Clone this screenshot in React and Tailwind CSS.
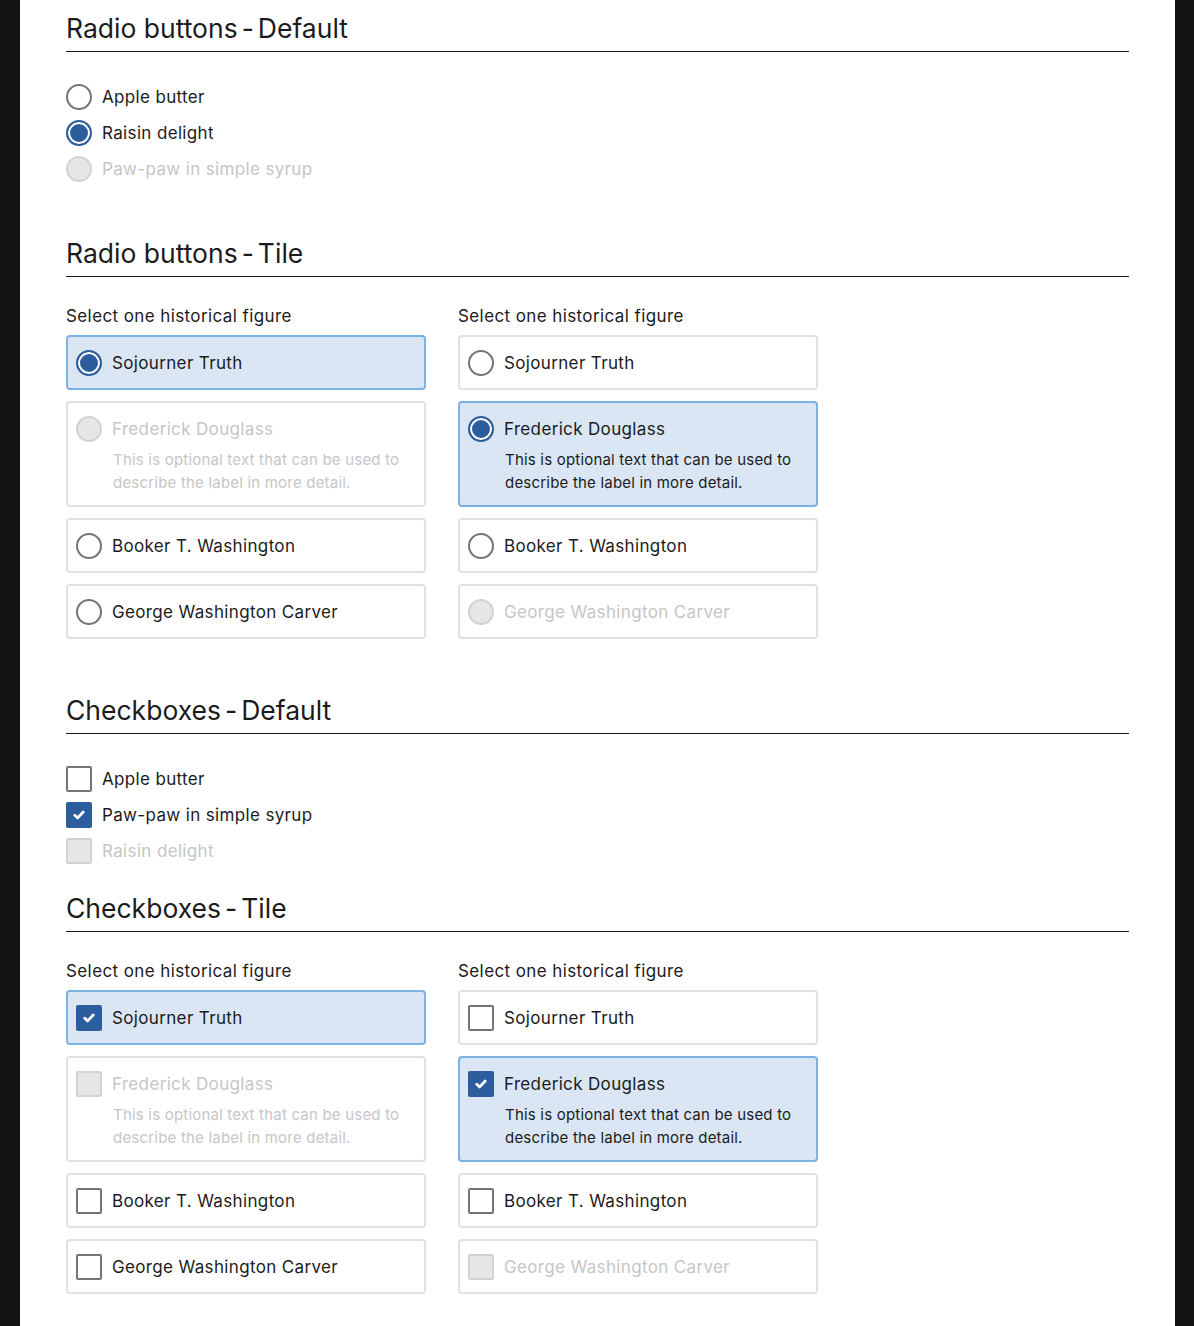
const FONT = { fontFamily: "Inter, 'Noto Sans', sans-serif" };

const Heading = ({ left, right, className = "" }) => (
    <h2 className={`text-[26.5px] leading-[34px] text-[#1b1b1b] pb-[6px] border-b border-[#1b1b1b] ${className}`}>
        {left}
        <span className="px-[4px]">-</span>
        {right}
    </h2>
);

const Radio = ({ checked, disabled }) => {
    if (disabled) {
        return <span className="shrink-0 w-[26px] h-[26px] rounded-full border-2 border-[#d2d2d2] bg-[#e6e6e6]"></span>;
    }
    if (checked) {
        return (
            <span className="shrink-0 w-[26px] h-[26px] rounded-full border-2 border-[#2c5e9e] bg-[#2c5e9e] shadow-[inset_0_0_0_2px_#fff]"></span>
        );
    }
    return <span className="shrink-0 w-[26px] h-[26px] rounded-full border-2 border-[#747474] bg-white"></span>;
};

const Checkbox = ({ checked, disabled }) => {
    if (disabled) {
        return <span className="shrink-0 w-[26px] h-[26px] rounded-[2px] border-2 border-[#d2d2d2] bg-[#e6e6e6]"></span>;
    }
    if (checked) {
        return (
            <span className="shrink-0 w-[26px] h-[26px] rounded-[2px] bg-[#2c5e9e] flex items-center justify-center">
                <svg width="12" height="10" viewBox="0 0 12 10" fill="none">
                    <path d="M1.8 5.3 L4.7 7.9 L10.2 2" stroke="#fff" strokeWidth="2.8" strokeLinecap="round" strokeLinejoin="round" />
                </svg>
            </span>
        );
    }
    return <span className="shrink-0 w-[26px] h-[26px] rounded-[2px] border-2 border-[#747474] bg-white"></span>;
};

const DefaultRow = ({ type, label, checked, disabled }) => (
    <div className="flex items-center gap-[10px] h-[36px]">
        {type === "radio" ? <Radio checked={checked} disabled={disabled} /> : <Checkbox checked={checked} disabled={disabled} />}
        <span className={`text-[17px] leading-[26px] tracking-[0.35px] ${disabled ? "text-[#c6c6c6]" : "text-[#1b1b1b]"}`}>{label}</span>
    </div>
);

const Tile = ({ type, label, desc, checked, disabled }) => {
    const box = checked
        ? "bg-[#dae6f4] border-[#7cb1e3]"
        : "bg-white border-[#e0e1e2]";
    const text = disabled ? "text-[#c6c6c6]" : "text-[#1b1b1b]";
    return (
        <div className={`flex items-start gap-[10px] border-2 rounded-[4px] pl-[8px] pr-[8px] pt-[12.5px] ${desc ? "pb-[11.5px]" : "pb-[12.5px]"} ${box}`}>
            {type === "radio" ? <Radio checked={checked} disabled={disabled} /> : <Checkbox checked={checked} disabled={disabled} />}
            <div>
                <div className={`text-[17px] leading-[26px] tracking-[0.35px] ${text}`}>{label}</div>
                {desc && (
                    <p className={`mt-[6px] text-[15px] leading-[23px] tracking-[0.2px] pl-[1px] ${text}`}>
                        This is optional text that can be used to
                        <br />
                        describe the label in more detail.
                    </p>
                )}
            </div>
        </div>
    );
};

const TileColumn = ({ type, items }) => (
    <div className="w-[360px]">
        <div className="text-[17px] leading-[24px] tracking-[0.4px] text-[#1b1b1b]">Select one historical figure</div>
        <div className="mt-[7px] flex flex-col gap-[11px]">
            {items.map((it) => (
                <Tile key={it.label} type={type} {...it} />
            ))}
        </div>
    </div>
);

const leftItems = [
    { label: "Sojourner Truth", checked: true },
    { label: "Frederick Douglass", desc: true, disabled: true },
    { label: "Booker T. Washington" },
    { label: "George Washington Carver" },
];

const rightItems = [
    { label: "Sojourner Truth" },
    { label: "Frederick Douglass", desc: true, checked: true },
    { label: "Booker T. Washington" },
    { label: "George Washington Carver", disabled: true },
];

export default function App() {
    return (
        <div className="min-h-[1326px] bg-[#111213] pl-[20px] pr-[19px]" style={FONT}>
            <div className="min-h-[1326px] bg-white pl-[46px] pr-[46px] pt-[11px] pb-[40px]">
                {/* radio default */}
                <Heading left="Radio buttons" right="Default" />
                <div className="mt-[27px]">
                    <DefaultRow type="radio" label="Apple butter" />
                    <DefaultRow type="radio" label="Raisin delight" checked />
                    <DefaultRow type="radio" label="Paw-paw in simple syrup" disabled />
                </div>

                {/* radio tile */}
                <Heading className="mt-[49px]" left="Radio buttons" right="Tile" />
                <div className="mt-[27px] flex gap-[32px]">
                    <TileColumn type="radio" items={leftItems} />
                    <TileColumn type="radio" items={rightItems} />
                </div>

                {/* checkbox default */}
                <Heading className="mt-[54px]" left="Checkboxes" right="Default" />
                <div className="mt-[27px]">
                    <DefaultRow type="checkbox" label="Apple butter" />
                    <DefaultRow type="checkbox" label="Paw-paw in simple syrup" checked />
                    <DefaultRow type="checkbox" label="Raisin delight" disabled />
                </div>

                {/* checkbox tile */}
                <Heading className="mt-[22px]" left="Checkboxes" right="Tile" />
                <div className="mt-[27px] flex gap-[32px]">
                    <TileColumn type="checkbox" items={leftItems} />
                    <TileColumn type="checkbox" items={rightItems} />
                </div>
            </div>
        </div>
    );
}
